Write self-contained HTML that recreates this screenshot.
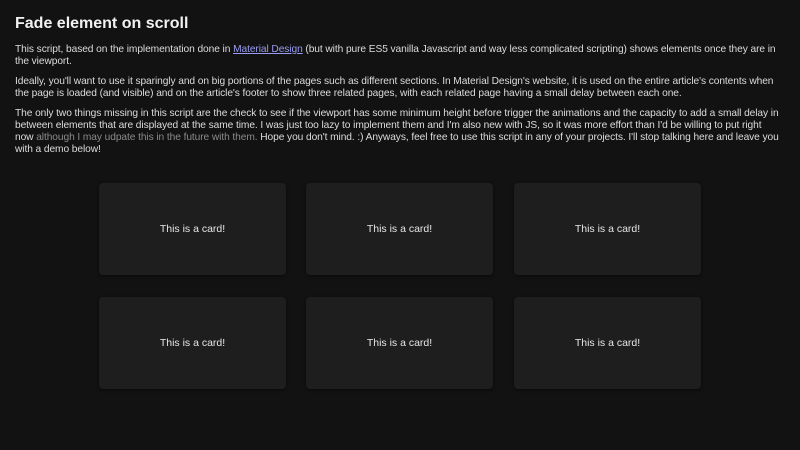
<!DOCTYPE html>
<html><head><style>
body{margin:0;background:#121212;color:#e0e0e0;font-family:"Liberation Sans",sans-serif;width:800px;height:450px;overflow:hidden}
.w{padding:0 15px}
h1{font-size:16px;font-weight:bold;margin:0;padding-top:14px;line-height:20px;color:#f2f2f2}
p{font-size:10.2px;letter-spacing:-0.08px;line-height:12px;margin:8px 0 0;color:#dcdcdc}
p:first-of-type{margin-top:10px}
a{color:#9a9cf0;text-decoration:underline}
.g{color:#8a8a8a}
.c{position:absolute;width:187px;height:92px;background:#1e1e1e;border-radius:4px;font-size:10.5px;color:#e6e6e6;display:flex;align-items:center;justify-content:center;box-shadow:0 1px 3px rgba(0,0,0,.5)}
</style></head><body>
<div class="w">
<h1>Fade element on scroll</h1>
<p>This script, based on the implementation done in <a>Material Design</a> (but with pure ES5 vanilla Javascript and way less complicated scripting) shows elements once they are in the viewport.</p>
<p>Ideally, you'll want to use it sparingly and on big portions of the pages such as different sections. In Material Design's website, it is used on the entire article's contents when the page is loaded (and visible) and on the article's footer to show three related pages, with each related page having a small delay between each one.</p>
<p>The only two things missing in this script are the check to see if the viewport has some minimum height before trigger the animations and the capacity to add a small delay in between elements that are displayed at the same time. I was just too lazy to implement them and I'm also new with JS, so it was more effort than I'd be willing to put right<br>now <span class="g">although I may udpate this in the future with them.</span> Hope you don't mind. :) Anyways, feel free to use this script in any of your projects. I'll stop talking here and leave you with a demo below!</p>
</div>
<div class="c" style="left:99px;top:183px">This is a card!</div>
<div class="c" style="left:306px;top:183px">This is a card!</div>
<div class="c" style="left:514px;top:183px">This is a card!</div>
<div class="c" style="left:99px;top:297px">This is a card!</div>
<div class="c" style="left:306px;top:297px">This is a card!</div>
<div class="c" style="left:514px;top:297px">This is a card!</div>
</body></html>
